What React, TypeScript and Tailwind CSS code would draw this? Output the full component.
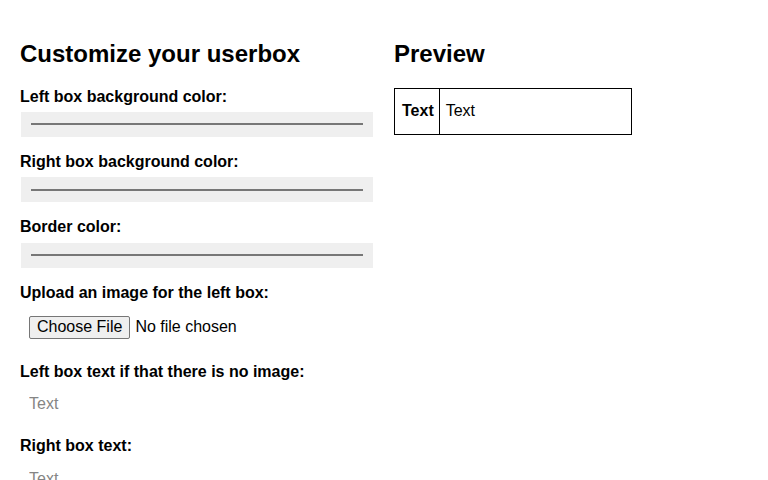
import React from "react";

function ColorField({ label }: { label: string }) {
  return (
    <div className="flex flex-col gap-[6px]">
      <label className="block font-bold text-[16px] leading-[1.15]">{label}</label>
      <div className="mx-px h-[25px] w-[352px] bg-[#efefef] px-[10px] flex items-center">
        <div className="h-[2px] w-full bg-[#777777]" />
      </div>
    </div>
  );
}

function TextField({ label }: { label: string }) {
  return (
    <div className="flex flex-col gap-[6px]">
      <label className="block font-bold text-[16px] leading-[1.15]">{label}</label>
      <input
        type="text"
        placeholder="Text"
        className="mx-px block w-[352px] px-2 py-2 text-[16px] leading-[1.15] outline-none placeholder:text-[#858585] text-black bg-transparent"
      />
    </div>
  );
}

export default function App() {
  return (
    <div className="min-h-screen bg-white text-black font-['Liberation_Sans',Arial,sans-serif] leading-[1.15] px-5 pt-[40px] pb-10">
      <div className="grid grid-cols-2 gap-5">
        <div className="flex flex-col">
          <h2 className="text-[24px] font-bold leading-[1.15] mb-5">Customize your userbox</h2>
          <div className="flex flex-col gap-[16px]">
            <ColorField label="Left box background color:" />
            <ColorField label="Right box background color:" />
            <ColorField label="Border color:" />
            <div className="flex flex-col gap-[6px]">
              <label className="block font-bold text-[16px] leading-[1.15]">Upload an image for the left box:</label>
              <div className="mx-px w-[352px] py-2 px-2">
                <input
                  type="file"
                  className="block text-[16px] leading-[1.15] text-black file:mr-[5px] file:rounded-[2px] file:border file:border-solid file:border-[#767676] file:bg-[#efefef] file:px-[7px] file:py-px file:text-black file:text-[16px] file:leading-[1.15]"
                />
              </div>
            </div>
            <TextField label="Left box text if that there is no image:" />
            <TextField label="Right box text:" />
          </div>
        </div>
        <div className="flex flex-col">
          <h2 className="text-[24px] font-bold leading-[1.15] mb-5">Preview</h2>
          <div className="flex w-[238px] h-[47px] border border-black">
            <div className="flex items-center border-r border-black pl-[7px] pr-[5px] font-bold text-[16px]">Text</div>
            <div className="flex items-center pl-[6px] text-[16px]">Text</div>
          </div>
        </div>
      </div>
    </div>
  );
}
